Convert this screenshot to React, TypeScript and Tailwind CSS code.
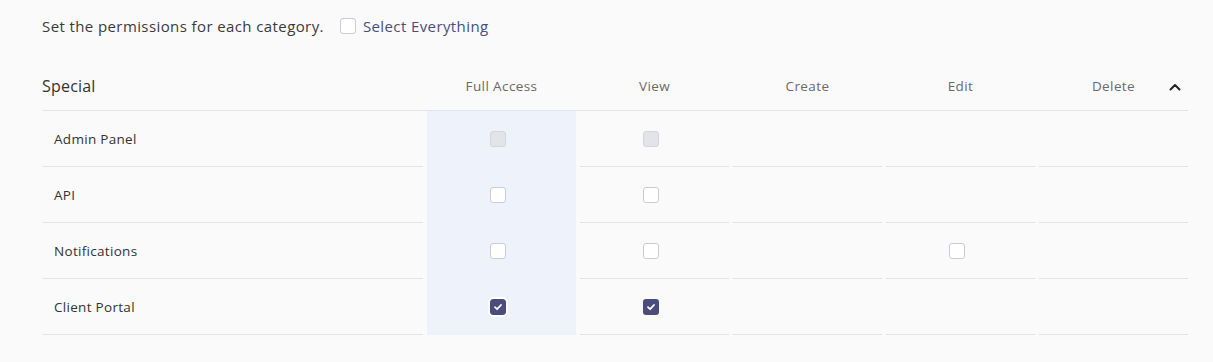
import React from "react";

type Cell = "none" | "disabled" | "empty" | "checked";

const rows: { name: string; cells: Cell[] }[] = [
  { name: "Admin Panel", cells: ["disabled", "disabled", "none", "none", "none"] },
  { name: "API", cells: ["empty", "empty", "none", "none", "none"] },
  { name: "Notifications", cells: ["empty", "empty", "none", "empty", "none"] },
  { name: "Client Portal", cells: ["checked", "checked", "none", "none", "none"] },
];

function Box({ kind, ring }: { kind: Cell; ring?: boolean }) {
  if (kind === "none") return null;
  if (kind === "disabled")
    return <div className="w-4 h-4 rounded-[3px] border border-[#d4d6dc] bg-[#e3e4ea]" />;
  if (kind === "empty")
    return <div className="w-4 h-4 rounded-[3px] border border-[#c9ccd3] bg-white" />;
  return (
    <div
      className={
        "w-4 h-4 rounded-[3px] bg-[#494c7c] flex items-center justify-center " +
        (ring ? "outline-2 outline-white" : "")
      }
    >
      <svg width="10" height="10" viewBox="0 0 10 10" fill="none">
        <path d="M2 5.2 L4.1 7.2 L8 3" stroke="white" strokeWidth="1.8" strokeLinecap="round" strokeLinejoin="round" />
      </svg>
    </div>
  );
}

export default function App() {
  const headers = ["Full Access", "View", "Create", "Edit", "Delete"];
  return (
    <div
      className="w-[1213px] h-[362px] bg-[#fafafa] text-[#333] pl-[42px] pt-[16px]"
      style={{ fontFamily: "'Open Sans', 'Noto Sans', sans-serif" }}
    >
      <div className="flex items-center h-[20px] text-[15px] tracking-[0.4px]">
        <span className="text-[#3a3a3a]">Set the permissions for each category.</span>
        <div className="ml-[16px] w-4 h-4 rounded-[3px] border border-[#c9ccd3] bg-white" />
        <span className="ml-[7px] text-[#4a4d7d]">Select Everything</span>
      </div>
      <div className="mt-[27px] w-[1146px]">
        <div className="relative grid grid-cols-[381px_149px_149px_149px_149px_149px] gap-x-[4px] h-[48px] items-center border-b border-[#e3e4ea]">
          <div className="text-[16px] tracking-[0.2px] text-[#333] pb-[1px]">Special</div>
          {headers.map((h) => (
            <div key={h} className="text-center text-[13.5px] tracking-[0.4px] text-[#6a6a6a]">
              {h}
            </div>
          ))}
          <svg className="absolute left-[1127px] top-[20px]" width="12" height="8" viewBox="0 0 12 8" fill="none">
            <path d="M1.5 6.5 L6 2 L10.5 6.5" stroke="#222" strokeWidth="2" strokeLinecap="round" strokeLinejoin="round" />
          </svg>
        </div>
        <div className="grid grid-cols-[381px_149px_149px_149px_149px_149px] gap-x-[4px]">
          {rows.map((r) => (
            <React.Fragment key={r.name}>
              <div className="h-[56px] flex items-center pl-[12px] pt-[1px] text-[13.5px] tracking-[0.3px] text-[#333] border-b border-[#e3e4ea]">
                {r.name}
              </div>
              {r.cells.map((c, i) => (
                <div
                  key={i}
                  className={
                    "h-[56px] flex items-center justify-center pr-[8px] " +
                    (i === 0 ? "bg-[#eef2fb]" : "border-b border-[#e3e4ea]")
                  }
                >
                  <Box kind={c} ring={i === 0} />
                </div>
              ))}
            </React.Fragment>
          ))}
        </div>
      </div>
    </div>
  );
}
